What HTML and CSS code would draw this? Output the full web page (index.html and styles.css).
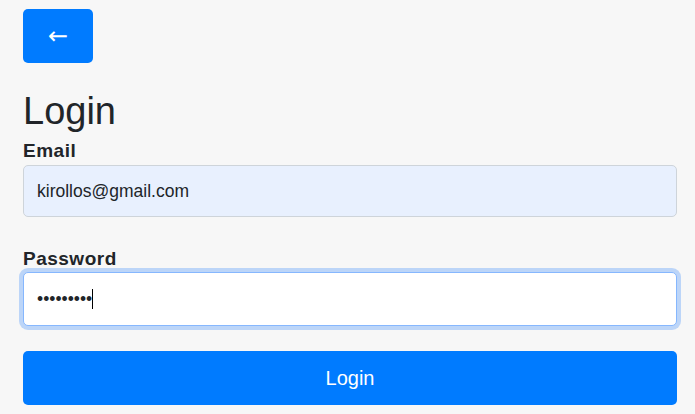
FILE: index.html
```html
<!DOCTYPE html>
<html lang="en">
<head>
<meta charset="utf-8">
<title>Login</title>
<link rel="stylesheet" href="styles.css">
</head>
<body>
<main class="page">
  <button class="back-btn" type="button" aria-label="Back">&larr;</button>
  <h1 class="title">Login</h1>
  <form class="login-form">
    <label class="field-label" for="email">Email</label>
    <input class="field autofilled" id="email" type="email" value="kirollos@gmail.com">
    <label class="field-label pw-label" for="password">Password</label>
    <div class="field-wrap">
      <input class="field focused" id="password" type="password" value="123456789">
      <span class="caret"></span>
    </div>
    <button class="submit-btn" type="button">Login</button>
  </form>
</main>
</body>
</html>
```
FILE: styles.css
```css
* { box-sizing: border-box; }
html, body { margin: 0; padding: 0; }
body {
  background: #f7f7f7;
  font-family: "Liberation Sans", Arial, sans-serif;
  color: #212529;
}
.page {
  padding: 9px 18px 0 23px;
}
.back-btn {
  display: flex;
  align-items: center;
  justify-content: center;
  width: 70px;
  height: 54px;
  border: 0;
  border-radius: 5px;
  background: #007bff;
  color: #fff;
  font-family: "DejaVu Sans", sans-serif;
  font-size: 24px;
  padding: 0;
}
.title {
  margin: 25px 0 0 0;
  font-size: 38px;
  font-weight: 400;
  line-height: 46px;
}
.login-form {
  display: flex;
  flex-direction: column;
}
.field-label {
  margin-top: 3px;
  font-size: 19px;
  font-weight: 700;
  letter-spacing: 0.5px;
  line-height: 27px;
  height: 28px;
}
.pw-label {
  margin-top: 28px;
  height: 27px;
}
.field {
  display: block;
  width: 100%;
  height: 52px;
  margin: 0;
  padding: 0 13px;
  border: 1px solid #ced4da;
  border-radius: 5px;
  font-family: "Liberation Sans", Arial, sans-serif;
  font-size: 17.5px;
  color: #212529;
  background: #fff;
  outline: none;
}
.autofilled {
  background: #e8f0fe;
}
.field-wrap {
  position: relative;
}
.focused {
  height: 54px;
  border-color: #86b7fe;
  box-shadow: 0 0 0 4px rgba(13, 110, 253, 0.25);
  caret-color: transparent;
}
.caret {
  position: absolute;
  left: 69px;
  top: 17px;
  width: 1px;
  height: 20px;
  background: #000;
}
.submit-btn {
  margin-top: 25px;
  height: 54px;
  border: 0;
  border-radius: 5px;
  background: #007bff;
  color: #fff;
  font-family: "Liberation Sans", Arial, sans-serif;
  font-size: 20px;
}
```
